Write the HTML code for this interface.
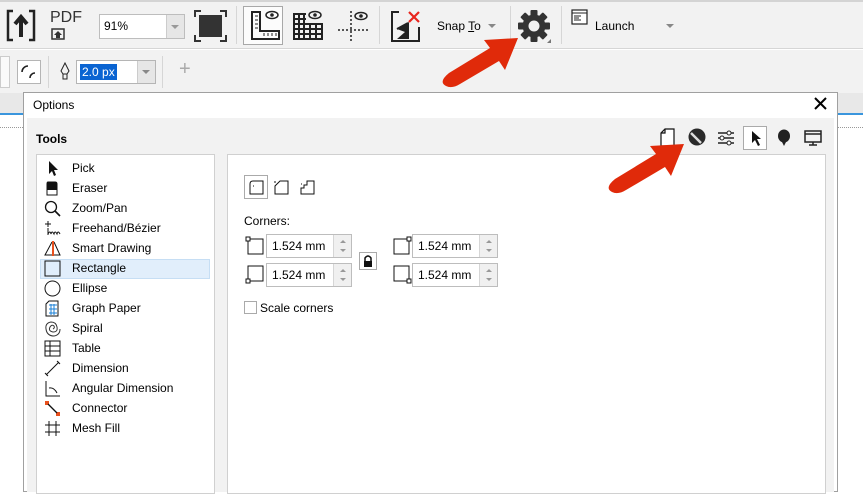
<!DOCTYPE html>
<html><head><meta charset="utf-8"><style>
*{margin:0;padding:0;box-sizing:border-box}
body{width:863px;height:492px;overflow:hidden;background:#fff;font-family:"Liberation Sans",sans-serif;font-size:12px;color:#000;position:relative}
.a{position:absolute}
.sep{position:absolute;width:1px;background:#d6d6d6}
.li{position:absolute;left:72px;font-size:12px}
.ic{position:absolute;left:44px}
.spin{position:absolute;width:86px;height:24px;border:1px solid #bdbdbd;background:#fff}
.spin span{position:absolute;left:5px;top:4px;font-size:12px}
.spin i{position:absolute;right:0;top:0;width:18px;height:22px;background:#f0f0f0;border-left:1px solid #d6d6d6}
.spin i:before{content:"";position:absolute;left:6px;top:5px;border:3px solid transparent;border-bottom:3px solid #999;border-top:0}
.spin i:after{content:"";position:absolute;left:6px;top:14px;border:3px solid transparent;border-top:3px solid #999;border-bottom:0}
</style></head><body>
<!-- toolbars -->
<div class="a" style="left:0;top:0;width:863px;height:2px;background:#d4d4d4"></div>
<div class="a" style="left:0;top:2px;width:863px;height:47px;background:#f2f2f2;border-bottom:1px solid #d6d6d6"></div>
<div class="a" style="left:0;top:50px;width:863px;height:43px;background:#f2f2f2"></div>
<!-- export icon -->
<svg class="a" style="left:6px;top:9px" width="30" height="33"><path d="M7 2H2V31H7M23 2H28V31H23" stroke="#222" stroke-width="2.5" fill="none"/><path d="M15 28V9M9 15L15 8L21 15" stroke="#222" stroke-width="4" fill="none"/></svg>
<div class="a" style="left:50px;top:9px;font-size:16px;color:#333">PDF</div>
<svg class="a" style="left:51px;top:28px" width="14" height="12"><rect x="1" y="1" width="12" height="10" fill="none" stroke="#333" stroke-width="1.5"/><path d="M7 3L3 7H5V10H9V7H11Z" fill="#333"/></svg>
<div class="a" style="left:99px;top:14px;width:86px;height:25px;border:1px solid #bdbdbd;background:#fff"><span class="a" style="left:4px;top:4px;font-size:12px">91%</span><div class="a" style="right:0;top:0;width:18px;height:23px;background:#e6e6e6;border-left:1px solid #ccc"></div><div class="a" style="right:5px;top:10px;border:4px solid transparent;border-top:4px solid #999;border-bottom:0"></div></div>
<svg class="a" style="left:194px;top:10px" width="33" height="32"><path d="M1 7V1H7M26 1H32V7M1 25V31H7M26 31H32V25" stroke="#333" stroke-width="2" fill="none"/><rect x="5" y="5" width="23" height="22" fill="#333"/></svg>
<div class="sep" style="left:236px;top:6px;height:38px"></div>
<div class="a" style="left:243px;top:6px;width:40px;height:39px;border:1px solid #a8a8a8;background:#fcfcfc"></div>
<svg class="a" style="left:250px;top:10px" width="30" height="30"><path d="M2 2V29H29V21H10V2Z" fill="none" stroke="#222" stroke-width="2"/><path d="M5 6H8M5 10H8M5 14H8M5 18H8M14 26V23M18 26V23M22 26V23M26 26V23" stroke="#222"/><ellipse cx="22" cy="5" rx="6" ry="3.5" fill="none" stroke="#222" stroke-width="1.5"/><circle cx="22" cy="5" r="1.8" fill="#222"/></svg>
<svg class="a" style="left:292px;top:10px" width="32" height="31"><path d="M1 4H14M1 9H14M1 14H31M1 19H31M1 24H31M1 29H31M2 4V30M7 4V30M12 4V30M18 14V30M24 14V30M30 14V30" stroke="#222" stroke-width="2" fill="none"/><ellipse cx="23" cy="5" rx="6" ry="3.5" fill="none" stroke="#222" stroke-width="1.5"/><circle cx="23" cy="5" r="1.8" fill="#222"/></svg>
<svg class="a" style="left:337px;top:10px" width="32" height="32"><path d="M14 1V31M1 20H31" stroke="#222" stroke-width="1.5" stroke-dasharray="2 2" fill="none"/><ellipse cx="24" cy="6" rx="6" ry="3.5" fill="none" stroke="#222" stroke-width="1.5"/><circle cx="24" cy="6" r="1.8" fill="#222"/></svg>
<div class="sep" style="left:379px;top:6px;height:38px"></div>
<svg class="a" style="left:390px;top:10px" width="34" height="32"><path d="M9 2H2V31H29V17" stroke="#222" stroke-width="2" fill="none"/><path d="M7 19L19 12V29H7L15 22" fill="#222"/><path d="M7 19L18 13" stroke="#222" stroke-width="2"/><path d="M19 2L29 12M29 2L19 12" stroke="#e8251d" stroke-width="2.2"/></svg>
<div class="a" style="left:437px;top:19px;font-size:12px">Snap <u>T</u>o</div>
<div class="a" style="left:488px;top:24px;border:4px solid transparent;border-top:4px solid #888;border-bottom:0"></div>
<div class="sep" style="left:510px;top:6px;height:38px"></div>
<svg class="a" style="left:518px;top:10px" width="34" height="34"><g transform="translate(16 16)"><g fill="#333"><rect x="-3.5" y="-16" width="7" height="32" rx="1"/><rect x="-3.5" y="-16" width="7" height="32" rx="1" transform="rotate(45)"/><rect x="-3.5" y="-16" width="7" height="32" rx="1" transform="rotate(90)"/><rect x="-3.5" y="-16" width="7" height="32" rx="1" transform="rotate(135)"/><circle r="11.5"/></g><circle r="5.5" fill="#f2f2f2"/></g><path d="M33 29V33H29Z" fill="#777"/></svg>
<div class="sep" style="left:561px;top:6px;height:38px"></div>
<svg class="a" style="left:571px;top:9px" width="18" height="16"><rect x="1" y="1" width="15" height="14" fill="#fff" stroke="#222" stroke-width="1.2"/><path d="M1 4H16M3 7H10M3 9H8M3 11H10" stroke="#222"/></svg>
<div class="a" style="left:595px;top:19px;font-size:12px">Launch</div>
<div class="a" style="left:666px;top:24px;border:4px solid transparent;border-top:4px solid #888;border-bottom:0"></div>
<!-- toolbar 2 -->
<div class="a" style="left:0;top:56px;width:10px;height:32px;border:1px solid #ccc;background:#fafafa"></div>
<div class="a" style="left:17px;top:60px;width:24px;height:24px;border:1px solid #b5b5b5;background:#fff"></div>
<svg class="a" style="left:20px;top:63px" width="18" height="18"><path d="M2 9A6 6 0 0 1 8 3M10 15A5 5 0 0 1 15 10" stroke="#222" stroke-width="1.6" fill="none"/></svg>
<div class="sep" style="left:48px;top:56px;height:32px"></div>
<svg class="a" style="left:60px;top:62px" width="10" height="18"><path d="M5 1L1 9L3 12H7L9 9Z M3 12V17H7V12" stroke="#222" fill="none"/></svg>
<div class="a" style="left:76px;top:60px;width:80px;height:24px;border:1px solid #b5b5b5;background:#fff"><span class="a" style="left:3px;top:3px;background:#0a64d2;color:#fff;padding:1px 2px;font-size:12px">2.0 px</span><div class="a" style="right:0;top:0;width:18px;height:22px;background:#e6e6e6;border-left:1px solid #ccc"></div><div class="a" style="right:5px;top:9px;border:4px solid transparent;border-top:4px solid #888;border-bottom:0"></div></div>
<div class="sep" style="left:162px;top:56px;height:32px"></div>
<div class="a" style="left:179px;top:58px;font-size:20px;color:#aaa">+</div>
<!-- background under toolbars -->
<div class="a" style="left:0;top:93px;width:23px;height:20px;background:#e8e8e8"></div>
<div class="a" style="left:0;top:113px;width:23px;height:2px;background:#3a96dd"></div>
<div class="a" style="left:0;top:127px;width:23px;border-top:1px dotted #999"></div>
<div class="a" style="left:838px;top:93px;width:25px;height:20px;background:#e8e8e8"></div>
<div class="a" style="left:838px;top:113px;width:25px;height:2px;background:#3a96dd"></div>
<div class="a" style="left:838px;top:127px;width:25px;border-top:1px dotted #999"></div>
<!-- dialog -->
<div class="a" style="left:23px;top:92px;width:815px;height:400px;border:1px solid #a0a0a0;background:#fff"></div>
<div class="a" style="left:33px;top:98px;font-size:12px">Options</div>
<svg class="a" style="left:814px;top:97px" width="13" height="13"><path d="M1 1L12 12M12 1L1 12" stroke="#000" stroke-width="2"/></svg>
<div class="a" style="left:27px;top:118px;width:807px;height:374px;background:#f2f2f2"></div>
<div class="a" style="left:36px;top:132px;font-size:12px;font-weight:bold">Tools</div>
<!-- top right icons -->
<svg class="a" style="left:660px;top:128px" width="16" height="19"><path d="M5 1H14V18H1V5Z M1 5H5V1" fill="#fff" stroke="#111" stroke-width="1.2"/></svg>
<svg class="a" style="left:688px;top:128px" width="18" height="18"><circle cx="9" cy="9" r="8.5" fill="#2a2a2a"/><path d="M3 5L13 15" stroke="#ddd" stroke-width="2.5"/></svg>
<svg class="a" style="left:717px;top:130px" width="18" height="16"><path d="M1 3H17M1 8H17M1 13H17" stroke="#222" stroke-width="1.5"/><circle cx="12" cy="3" r="2" fill="#fff" stroke="#222"/><circle cx="5" cy="8" r="2" fill="#fff" stroke="#222"/><circle cx="12" cy="13" r="2" fill="#fff" stroke="#222"/></svg>
<div class="a" style="left:743px;top:126px;width:24px;height:24px;border:1px solid #aaa;background:#fff"></div>
<svg class="a" style="left:750px;top:130px" width="12" height="17"><path d="M2 1V13L5 10L8 16L10 15L7 9H11Z" fill="#111"/></svg>
<svg class="a" style="left:777px;top:129px" width="14" height="18"><ellipse cx="7" cy="7" rx="6" ry="6.5" fill="#222"/><path d="M5 13H9L7 17Z" fill="#222"/></svg>
<svg class="a" style="left:804px;top:130px" width="18" height="16"><rect x="1" y="1" width="16" height="11" fill="none" stroke="#222" stroke-width="1.5"/><path d="M1 4H17M5 15H13M9 12V15" stroke="#222" stroke-width="1.5"/></svg>
<!-- list -->
<div class="a" style="left:36px;top:154px;width:179px;height:340px;border:1px solid #d0d0d0;background:#fff"></div>
<div class="a" style="left:40px;top:259px;width:170px;height:20px;background:#e1eefb;border:1px solid #c6def4"></div>
<svg class="ic" style="top:160px" width="16" height="17"><path d="M5 1V14L8 11L10 16L12 15L10 10H14Z" fill="#111"/></svg>
<div class="li" style="top:161px">Pick</div>
<svg class="ic" style="top:180px" width="16" height="17"><path d="M4 2H11Q13 2 13 4V15H3V4Q3 2 4 2Z" fill="#fff" stroke="#111"/><path d="M4 2H11Q13 2 13 4V10H3V4Q3 2 4 2Z" fill="#111"/></svg>
<div class="li" style="top:181px">Eraser</div>
<svg class="ic" style="top:200px" width="18" height="17"><circle cx="7" cy="7" r="5.5" fill="none" stroke="#111" stroke-width="1.3"/><path d="M11 11L16 16" stroke="#111" stroke-width="1.6"/></svg>
<div class="li" style="top:201px">Zoom/Pan</div>
<svg class="ic" style="top:220px" width="18" height="17"><path d="M4 1V7M1 4H7M4 8V15M4 14Q6 10 7 14Q8 10 10 14Q11 10 13 14Q14 10 16 14" stroke="#111" fill="none"/></svg>
<div class="li" style="top:221px">Freehand/Bézier</div>
<svg class="ic" style="top:240px" width="18" height="17"><path d="M8 2L1 15H8M10 2L16 15H10" stroke="#111" fill="none"/><path d="M9 1V16" stroke="#e8501d" stroke-width="2"/></svg>
<div class="li" style="top:241px">Smart Drawing</div>
<svg class="ic" style="top:260px" width="18" height="18"><rect x="1" y="1" width="15" height="15" fill="none" stroke="#111"/></svg>
<div class="li" style="top:261px">Rectangle</div>
<svg class="ic" style="top:280px" width="18" height="18"><circle cx="8.5" cy="8.5" r="7.5" fill="none" stroke="#111"/></svg>
<div class="li" style="top:281px">Ellipse</div>
<svg class="ic" style="top:300px" width="18" height="18"><path d="M5 1H14V16H2V4Z" fill="#fff" stroke="#111"/><path d="M5 5H13M5 9H13M5 13H13M7 4V15M10 4V15" stroke="#1a7fd6"/></svg>
<div class="li" style="top:301px">Graph Paper</div>
<svg class="ic" style="top:320px" width="18" height="18"><path d="M9 9Q11 8 10 6Q8 4 6 7Q4 11 9 12Q14 12 13 7Q12 2 7 2Q1 3 2 9Q3 16 10 16Q16 15 16 9" stroke="#333" fill="none"/></svg>
<div class="li" style="top:321px">Spiral</div>
<svg class="ic" style="top:340px" width="18" height="18"><rect x="1" y="1" width="15" height="15" fill="none" stroke="#111"/><path d="M1 6H16M1 11H16M6 1V16" stroke="#111"/></svg>
<div class="li" style="top:341px">Table</div>
<svg class="ic" style="top:360px" width="18" height="18"><path d="M2 15L15 2M1 13L4 16M13 1L16 4" stroke="#111"/></svg>
<div class="li" style="top:361px">Dimension</div>
<svg class="ic" style="top:380px" width="18" height="18"><path d="M2 1V16H16M5 8Q10 7 13 13" stroke="#111" fill="none"/></svg>
<div class="li" style="top:381px">Angular Dimension</div>
<svg class="ic" style="top:400px" width="18" height="18"><rect x="1" y="1" width="4" height="4" fill="#e8501d"/><rect x="12" y="12" width="4" height="4" fill="#e8501d"/><path d="M4 4L13 13" stroke="#111" stroke-width="1.3"/></svg>
<div class="li" style="top:401px">Connector</div>
<svg class="ic" style="top:420px" width="18" height="18"><path d="M1 5H16M1 12H16M5 1V16M12 1V16" stroke="#111"/></svg>
<div class="li" style="top:421px">Mesh Fill</div>
<!-- right panel -->
<div class="a" style="left:227px;top:154px;width:599px;height:340px;border:1px solid #d0d0d0;background:#fff"></div>
<div class="a" style="left:244px;top:175px;width:24px;height:24px;border:1px solid #aaa"></div>
<svg class="a" style="left:248px;top:178px" width="70" height="18"><path d="M5 3H15V16H2V6Q2 3 5 3Z" fill="none" stroke="#111"/><path d="M5 8H6" stroke="#111"/><path d="M32 3H40V16H27V8Z" fill="none" stroke="#111"/><path d="M27 3V5" stroke="#111"/><path d="M59 3H66V16H53V10H56V7H59Z" fill="none" stroke="#111"/><path d="M53 6H54" stroke="#111"/></svg>
<div class="a" style="left:244px;top:214px;font-size:12px">Corners:</div>
<svg class="a" style="left:245px;top:236px" width="20" height="20"><rect x="3" y="3" width="15" height="15" fill="none" stroke="#111"/><rect x="1" y="1" width="4" height="4" fill="#fff" stroke="#111"/></svg>
<svg class="a" style="left:245px;top:265px" width="20" height="20"><rect x="3" y="1" width="15" height="15" fill="none" stroke="#111"/><rect x="1" y="14" width="4" height="4" fill="#fff" stroke="#111"/></svg>
<svg class="a" style="left:393px;top:236px" width="20" height="20"><rect x="1" y="3" width="15" height="15" fill="none" stroke="#111"/><rect x="14" y="1" width="4" height="4" fill="#fff" stroke="#111"/></svg>
<svg class="a" style="left:393px;top:265px" width="20" height="20"><rect x="1" y="1" width="15" height="15" fill="none" stroke="#111"/><rect x="14" y="14" width="4" height="4" fill="#fff" stroke="#111"/></svg>
<div class="spin" style="left:266px;top:234px"><span>1.524 mm</span><i></i></div>
<div class="spin" style="left:266px;top:263px"><span>1.524 mm</span><i></i></div>
<div class="spin" style="left:412px;top:234px"><span>1.524 mm</span><i></i></div>
<div class="spin" style="left:412px;top:263px"><span>1.524 mm</span><i></i></div>
<div class="a" style="left:359px;top:252px;width:18px;height:18px;border:1px solid #aaa;background:#fff"></div>
<svg class="a" style="left:362px;top:254px" width="12" height="14"><path d="M3 7V4Q6 0 9 4V7" stroke="#111" fill="none" stroke-width="1.5"/><rect x="2" y="7" width="8" height="6" fill="#111"/></svg>
<div class="a" style="left:244px;top:301px;width:13px;height:13px;border:1px solid #aaa;background:#fff"></div>
<div class="a" style="left:260px;top:301px;font-size:12px">Scale corners</div>
<!-- red arrows -->
<svg class="a" style="left:0;top:0" width="863" height="492">
<g fill="#e02a0a">
<path d="M446 86Q438 82 449 73L490 48L484 40L518 38L505 70L499 61L460 84Q452 89 446 86Z"/>
<path d="M612 192Q604 188 615 179L656 154L650 146L684 144L671 176L665 167L626 190Q618 195 612 192Z"/>
</g></svg>
</body></html>
